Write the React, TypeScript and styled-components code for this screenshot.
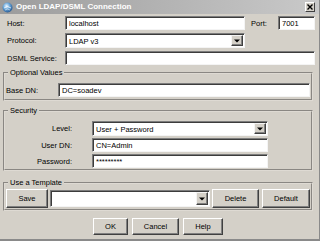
import React from "react";
import styled, { createGlobalStyle } from "styled-components";

const Global = createGlobalStyle`
  html, body { margin: 0; padding: 0; background: #d4d0c8; }
  body { font-family: "Liberation Sans", Arial, sans-serif; font-size: 7.5px; color: #000; }
  * { box-sizing: border-box; }
`;

const Window = styled.div`
  width: 320px;
  height: 241px;
  background: #d4d0c8;
  display: flex;
  flex-direction: column;
  overflow: hidden;
  border-right: 1px solid #8a8a8a;
  border-bottom: 2px solid #8a8a8a;
`;

const TitleBar = styled.div`
  height: 14px;
  flex: none;
  display: flex;
  align-items: center;
  padding: 0 4px 0 2px;
  gap: 3px;
  background: linear-gradient(to right, #9c9c9c, #c9c9c9);
`;

const Title = styled.span`
  flex: 1;
  color: #fff;
  font-weight: bold;
  font-size: 8px;
  line-height: 14px;
  white-space: nowrap;
`;

const CloseBtn = styled.div`
  width: 10px;
  height: 10px;
  background: #d4d0c8;
  border: 1px solid;
  border-color: #fff #404040 #404040 #fff;
  display: flex;
  align-items: center;
  justify-content: center;
`;

const Body = styled.div`
  display: flex;
  flex-direction: column;
  padding: 2px 0 0 3px;
`;

const Row = styled.div<{ $h?: number; $mt?: number }>`
  display: flex;
  align-items: center;
  height: ${(p) => p.$h ?? 14}px;
  margin-top: ${(p) => p.$mt ?? 0}px;
  flex: none;
`;

const Label = styled.span<{ $w: number; $pl?: number; $right?: boolean; $mr?: number }>`
  width: ${(p) => p.$w}px;
  padding-left: ${(p) => p.$pl ?? 0}px;
  margin-right: ${(p) => p.$mr ?? 0}px;
  text-align: ${(p) => (p.$right ? "right" : "left")};
  flex: none;
  white-space: nowrap;
  line-height: 9px;
`;

const Field = styled.div<{ $w: number; $h?: number; $ml?: number }>`
  width: ${(p) => p.$w}px;
  height: ${(p) => p.$h ?? 14}px;
  margin-left: ${(p) => p.$ml ?? 0}px;
  flex: none;
  background: #fff;
  border: 1px solid;
  border-color: #7c7c7c #f4f4f4 #f4f4f4 #7c7c7c;
  box-shadow: inset 1px 1px 0 #3c3c3c;
  display: flex;
  align-items: center;
  padding: 1px 1px 0 3px;
  white-space: nowrap;
  line-height: 9px;
`;

const FieldText = styled.span`
  flex: 1;
`;

const ArrowBtn = styled.div`
  width: 12px;
  align-self: stretch;
  margin: 0 0 1px 0;
  background: #d4d0c8;
  border: 1px solid;
  border-color: #f4f4f4 #404040 #404040 #f4f4f4;
  box-shadow: inset -1px -1px 0 #808080;
  display: flex;
  align-items: center;
  justify-content: center;
`;

const Group = styled.fieldset<{ $mt: number; $pb?: number }>`
  margin: ${(p) => p.$mt}px 0 0 0;
  width: 310px;
  border: 2px groove #dedad3;
  padding: 6px 0 ${(p) => p.$pb ?? 2}px 1px;
  min-width: 0;
  flex: none;
`;

const Legend = styled.legend`
  margin-left: 2px;
  padding: 0 2px;
  line-height: 9px;
  font-size: 7.5px;
`;

const GroupCol = styled.div`
  display: flex;
  flex-direction: column;
`;

const Btn = styled.div<{ $w: number; $h: number; $ml?: number }>`
  width: ${(p) => p.$w}px;
  height: ${(p) => p.$h}px;
  margin-left: ${(p) => p.$ml ?? 0}px;
  flex: none;
  background: #d4d0c8;
  border: 1px solid;
  border-color: #fff #404040 #404040 #fff;
  box-shadow: inset -1px -1px 0 #808080;
  display: flex;
  align-items: center;
  justify-content: center;
  line-height: 9px;
`;

const ButtonBar = styled.div`
  display: flex;
  align-items: center;
  margin-top: 7px;
  padding-left: 90px;
  gap: 4px;
`;

const Arrow = () => (
  <svg width="6" height="4" viewBox="0 0 6 4">
    <path d="M0 0.5 H6 L3 3.5 Z" fill="#000" />
  </svg>
);

const Combo = ({ w, h, text, ml }: { w: number; h: number; text: string; ml?: number }) => (
  <Field $w={w} $h={h} $ml={ml} style={{ paddingRight: 1 }}>
    <FieldText>{text}</FieldText>
    <ArrowBtn>
      <Arrow />
    </ArrowBtn>
  </Field>
);

const AppIcon = () => (
  <svg width="11" height="11" viewBox="0 0 11 11">
    <defs>
      <radialGradient id="g" cx="40%" cy="35%" r="65%">
        <stop offset="0" stopColor="#e8f4ff" />
        <stop offset="0.5" stopColor="#6aa6d8" />
        <stop offset="1" stopColor="#2a5d96" />
      </radialGradient>
    </defs>
    <circle cx="5.5" cy="5.5" r="5" fill="url(#g)" />
    <path d="M2 6 Q5.5 3 9 6" stroke="#fff" strokeWidth="0.9" fill="none" opacity="0.8" />
    <path d="M3 8 Q5.5 6 8 8" stroke="#fff" strokeWidth="0.7" fill="none" opacity="0.7" />
  </svg>
);

export default function App() {
  return (
    <>
      <Global />
      <Window>
        <TitleBar>
          <AppIcon />
          <Title>Open LDAP/DSML Connection</Title>
          <CloseBtn>
            <svg width="6" height="6" viewBox="0 0 6 6">
              <path d="M0.5 0.5 L5.5 5.5 M5.5 0.5 L0.5 5.5" stroke="#000" strokeWidth="1.4" />
            </svg>
          </CloseBtn>
        </TitleBar>
        <Body>
          <Row>
            <Label $w={62} $pl={4}>Host:</Label>
            <Field $w={180}>localhost</Field>
            <Label $w={27} $pl={6} style={{ width: 33 }}>Port:</Label>
            <Field $w={37}>7001</Field>
          </Row>
          <Row $h={15} $mt={3}>
            <Label $w={62} $pl={4}>Protocol:</Label>
            <Combo w={180} h={15} text="LDAP v3" />
          </Row>
          <Row $mt={3}>
            <Label $w={62} $pl={4}>DSML Service:</Label>
            <Field $w={250} />
          </Row>

          <Group $mt={3}>
            <Legend>Optional Values</Legend>
            <Row>
              <Label $w={52}>Base DN:</Label>
              <Field $w={252}>DC=soadev</Field>
            </Row>
          </Group>

          <Group $mt={5} $pb={1}>
            <Legend>Security</Legend>
            <GroupCol>
              <Row $h={15}>
                <Label $w={66} $right $mr={20}>Level:</Label>
                <Combo w={176} h={15} text="User + Password" />
              </Row>
              <Row $mt={2}>
                <Label $w={66} $right $mr={20}>User DN:</Label>
                <Field $w={176}>CN=Admin</Field>
              </Row>
              <Row $mt={2}>
                <Label $w={66} $right $mr={20}>Password:</Label>
                <Field $w={176}>*********</Field>
              </Row>
            </GroupCol>
          </Group>

          <Group $mt={7} $pb={1} style={{ paddingTop: 2 }}>
            <Legend>Use a Template</Legend>
            <Row $h={19}>
              <Btn $w={42} $h={19}>Save</Btn>
              <Combo w={160} h={17} text="" ml={2} />
              <Btn $w={47} $h={19} $ml={2}>Delete</Btn>
              <Btn $w={48} $h={19} $ml={3}>Default</Btn>
            </Row>
          </Group>

          <ButtonBar>
            <Btn $w={35} $h={17}>OK</Btn>
            <Btn $w={47} $h={17}>Cancel</Btn>
            <Btn $w={40} $h={17}>Help</Btn>
          </ButtonBar>
        </Body>
      </Window>
    </>
  );
}
